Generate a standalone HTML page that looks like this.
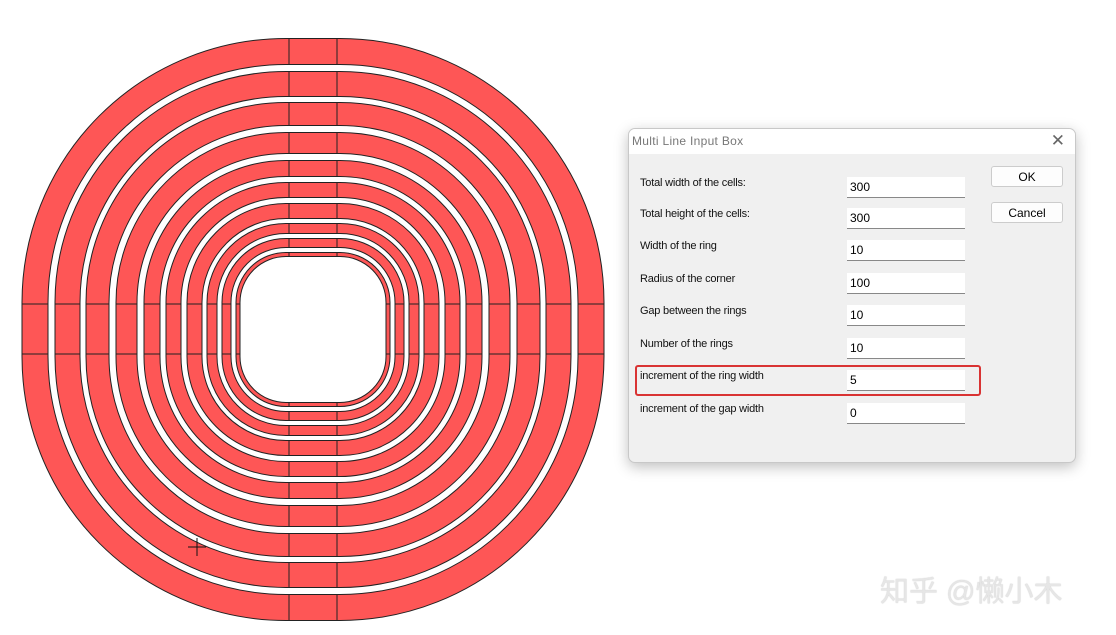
<!DOCTYPE html>
<html><head><meta charset="utf-8"><style>
body{margin:0;width:1116px;height:635px;background:#fff;position:relative;overflow:hidden;font-family:"Liberation Sans",sans-serif}
.dlg{position:absolute;left:628px;top:128px;width:446px;height:333px;background:#f0f0f0;border:1px solid #c8c8c8;border-radius:7px;box-shadow:0 4px 14px rgba(0,0,0,.25);overflow:hidden}
.tt{height:25px;background:#fff;font-size:12px;color:#777;line-height:24px;padding-left:3px;letter-spacing:.3px}
.x{position:absolute;right:10px;top:2px;font-size:17px;color:#666}
.lb{position:absolute;left:11px;font-size:11px;color:#111;letter-spacing:-.2px}
.in{position:absolute;left:218px;width:118px;height:21px;background:#fff;border-bottom:1px solid #888;font-size:12px;line-height:21px;padding-left:3px;box-sizing:border-box}
.bt{position:absolute;left:362px;width:72px;height:21px;background:#fdfdfd;border:1px solid #ccc;border-radius:3px;font-size:12px;text-align:center;line-height:20px;box-sizing:border-box}
.red{position:absolute;left:6px;top:236px;width:346px;height:31px;border:2px solid #d93333;border-radius:3px;box-sizing:border-box}
.wm{position:absolute;left:880px;top:568px;font-size:29px;color:#e6e6e6;font-family:"Liberation Sans","Noto Sans CJK SC",sans-serif;text-shadow:0 0 1px #bbb}
</style></head><body>
<svg width="620" height="635" style="position:absolute;left:0;top:0" id="s"></svg>
<script>
var s=document.getElementById('s'),O=[291,258,227,197,169,147,126,106,91,77],I=[265,233,204,176,153,132,111,96,82,73],h='',cx=313,cy=329.5;
function rr(e){var r=e-27,x=cx-e,y=cy-e,w=2*e;return 'M'+(x+r)+' '+y+'h'+(w-2*r)+'a'+r+' '+r+' 0 0 1 '+r+' '+r+'v'+(w-2*r)+'a'+r+' '+r+' 0 0 1 -'+r+' '+r+'h-'+(w-2*r)+'a'+r+' '+r+' 0 0 1 -'+r+' -'+r+'v-'+(w-2*r)+'a'+r+' '+r+' 0 0 1 '+r+' -'+r+'z';}
for(var k=0;k<10;k++){var o=O[k],i=I[k];h+='<path d="'+rr(o)+rr(i)+'" fill="#fe5656" fill-rule="evenodd" stroke="#222" stroke-width="1"/>';
[304,354].forEach(function(y){h+='<line x1="'+(cx-o)+'" x2="'+(cx-i)+'" y1="'+y+'" y2="'+y+'" stroke="#222"/><line x1="'+(cx+i)+'" x2="'+(cx+o)+'" y1="'+y+'" y2="'+y+'" stroke="#222"/>';});
[289,337].forEach(function(x){h+='<line y1="'+(cy-o)+'" y2="'+(cy-i)+'" x1="'+x+'" x2="'+x+'" stroke="#222"/><line y1="'+(cy+i)+'" y2="'+(cy+o)+'" x1="'+x+'" x2="'+x+'" stroke="#222"/>';});}
h+='<line x1="188" x2="206" y1="547" y2="547" stroke="#111"/><line x1="197" x2="197" y1="538" y2="556" stroke="#111"/>';
s.innerHTML=h;
</script>
<div class="dlg">
<div class="tt">Multi Line Input Box</div><div class="x">✕</div>
<div class="red"></div>
<div class="lb" style="top:48px">Total width of the cells:</div><div class="in" style="top:48px">300</div>
<div class="lb" style="top:79px">Total height of the cells:</div><div class="in" style="top:79px">300</div>
<div class="lb" style="top:111px">Width of the ring</div><div class="in" style="top:111px">10</div>
<div class="lb" style="top:144px">Radius of the corner</div><div class="in" style="top:144px">100</div>
<div class="lb" style="top:176px">Gap between the rings</div><div class="in" style="top:176px">10</div>
<div class="lb" style="top:209px">Number of the rings</div><div class="in" style="top:209px">10</div>
<div class="lb" style="top:241px">increment of the ring width</div><div class="in" style="top:241px">5</div>
<div class="lb" style="top:274px">increment of the gap width</div><div class="in" style="top:274px">0</div>
<div class="bt" style="top:37px">OK</div><div class="bt" style="top:73px">Cancel</div>
</div>
<div class="wm">知乎 @懒小木</div>
</body></html>
